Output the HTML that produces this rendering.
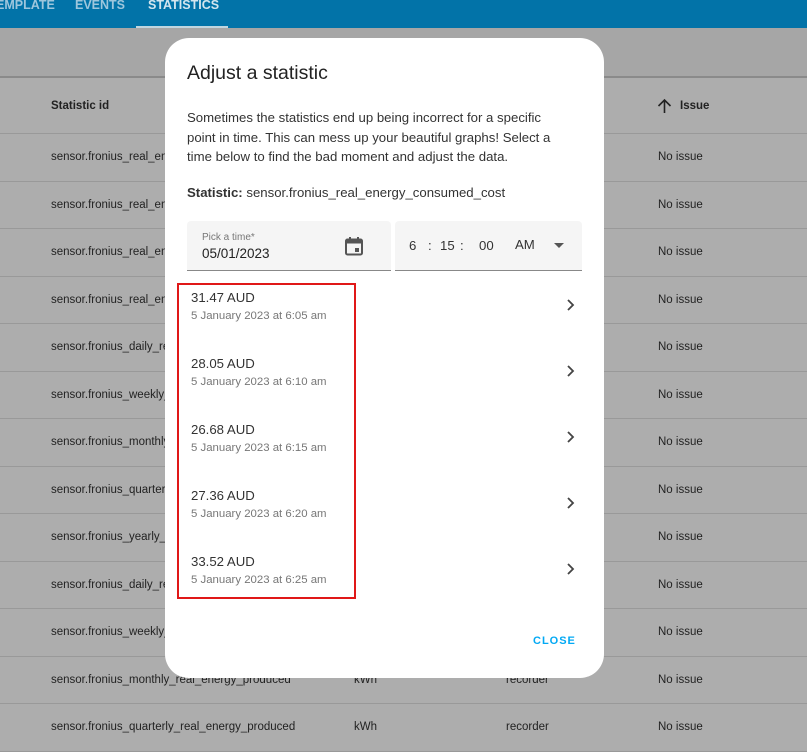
<!DOCTYPE html>
<html><head><meta charset="utf-8"><style>
*{margin:0;padding:0;box-sizing:border-box}
body{width:807px;height:750px;overflow:hidden;background:#adadad;font-family:"Liberation Sans",sans-serif;position:relative;color:#1f1f1f}
.top{position:absolute;left:0;top:0;width:807px;height:28px;background:#0273a8}
.tab{position:absolute;top:-2px;font-size:12.5px;font-weight:bold;color:#9ec6dc;letter-spacing:0}
.gray{position:absolute;left:0;top:28px;width:807px;height:50px;background:#a6a6a6;border-bottom:2px solid #8a8a8a}
.row{position:absolute;left:0;width:807px;border-bottom:1px solid #999;font-size:11.5px;color:#222}
.row span{position:absolute}
.dlg{position:absolute;left:165px;top:38px;width:439px;height:640px;background:#fff;border-radius:24px}
.t{position:absolute;font-size:19.5px;left:22px;top:24px;color:#222}
.p{position:absolute;left:22px;top:70px;width:380px;font-size:13.2px;line-height:19.5px;color:#333}
.s{position:absolute;left:22px;top:147px;font-size:13.2px;color:#333}
.f{position:absolute;top:183px;height:50px;background:#f5f5f5;border-bottom:1px solid #888;border-radius:4px 4px 0 0}
.it{position:absolute;left:26px;font-size:13.2px;color:#333}
.it b{font-weight:normal;display:block}
.it i{font-style:normal;display:block;font-size:11.4px;color:#777;margin-top:5px}
.ch{position:absolute;left:401px}
</style></head><body>
<div class="top">
<div class="tab" style="left:-4px">EMPLATE</div>
<div class="tab" style="left:75px">EVENTS</div>
<div class="tab" style="left:148px;color:#d4e6ef">STATISTICS</div>
<div style="position:absolute;left:136px;top:26px;width:92px;height:2px;background:#c0d6e0"></div>
</div>
<div class="gray"></div>
<div class="row" style="top:80px;height:54px;font-weight:bold;font-size:11.5px"><span style="left:51px;top:20px">Statistic id</span>
<span style="left:680px;top:20px">Issue</span></div>
<svg style="position:absolute;left:657px;top:98px" width="15" height="16" viewBox="0 0 15 16"><path d="M7.5 15V2M1.5 8L7.5 2L13.5 8" stroke="#222" stroke-width="1.6" fill="none"/></svg>
<div id="rows"></div>
<script>
var n=["sensor.fronius_real_energy_consumed","sensor.fronius_real_energy_produced","sensor.fronius_real_energy_consumed_cost","sensor.fronius_real_energy_produced_c","sensor.fronius_daily_real_energy","sensor.fronius_weekly_real_energy","sensor.fronius_monthly_real_energy","sensor.fronius_quarterly_real_energy","sensor.fronius_yearly_real_energy","sensor.fronius_daily_real_energy_produced","sensor.fronius_weekly_real_energy_produced","sensor.fronius_monthly_real_energy_produced","sensor.fronius_quarterly_real_energy_produced"];
var h="";for(var i=0;i<13;i++){var t=134+i*47.5;h+='<div class="row" style="top:'+t+'px;height:47.5px"><span style="left:51px;top:17px">'+n[i]+'</span><span style="left:354px;top:17px">kWh</span><span style="left:506px;top:17px">recorder</span><span style="left:658px;top:17px">No issue</span></div>';}
document.getElementById("rows").innerHTML=h;
</script>
<div class="dlg">
<div class="t">Adjust a statistic</div>
<div class="p">Sometimes the statistics end up being incorrect for a specific point in time. This can mess up your beautiful graphs! Select a time below to find the bad moment and adjust the data.</div>
<div class="s"><b>Statistic:</b> sensor.fronius_real_energy_consumed_cost</div>
<div class="f" style="left:22px;width:204px">
<div style="position:absolute;left:15px;top:11px;font-size:10px;color:#777">Pick a time*</div>
<div style="position:absolute;left:15px;top:25px;font-size:13.5px;color:#222">05/01/2023</div>
<svg style="position:absolute;left:157px;top:15px" width="20" height="20" viewBox="0 0 20 20"><rect x="2" y="3.5" width="16" height="15" rx="1.5" fill="none" stroke="#555" stroke-width="2"/><rect x="2" y="3.5" width="16" height="4" fill="#555"/><rect x="5" y="1" width="2" height="4" fill="#555"/><rect x="13" y="1" width="2" height="4" fill="#555"/><rect x="11" y="12" width="4" height="4" fill="#555"/></svg>
</div>
<div class="f" style="left:230px;width:187px;font-size:13.2px;color:#333">
<span style="position:absolute;left:14px;top:17px">6</span>
<span style="position:absolute;left:33px;top:17px">:</span>
<span style="position:absolute;left:45px;top:17px">15</span>
<span style="position:absolute;left:65px;top:17px">:</span>
<span style="position:absolute;left:84px;top:17px">00</span>
<span style="position:absolute;left:120px;top:16px">AM</span>
<svg style="position:absolute;left:159px;top:22px" width="12" height="6"><path d="M0 0H10L5 5Z" fill="#555"/></svg>
</div>
<div style="position:absolute;left:12px;top:245px;width:179px;height:316px;border:2px solid #e01818"></div>
<div id="items"></div>
<div style="position:absolute;left:368px;top:597px;font-size:11px;font-weight:bold;color:#03a9f4;letter-spacing:1px">CLOSE</div>
</div>
<script>
var v=[["31.47","6:05"],["28.05","6:10"],["26.68","6:15"],["27.36","6:20"],["33.52","6:25"]];var g="";
for(var i=0;i<5;i++){var t=252+i*66;g+='<div class="it" style="top:'+t+'px"><b>'+v[i][0]+' AUD</b><i>5 January 2023 at '+v[i][1]+' am</i></div><svg class="ch" style="top:'+(t+8)+'px" width="10" height="14" viewBox="0 0 10 14"><path d="M2 2L7 7L2 12" stroke="#444" stroke-width="1.8" fill="none"/></svg>';}
document.getElementById("items").innerHTML=g;
</script>
</body></html>
